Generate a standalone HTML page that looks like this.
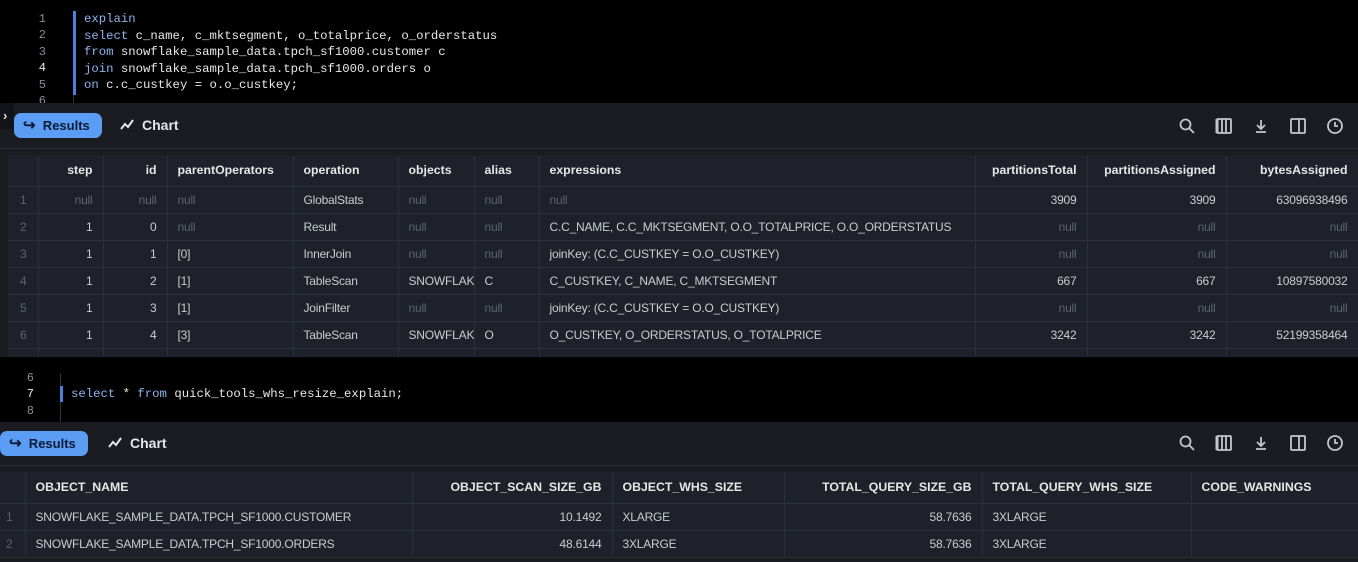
<!DOCTYPE html>
<html><head><style>
*{margin:0;padding:0;box-sizing:border-box}
body{width:1358px;height:562px;background:#000;overflow:hidden;position:relative;font-family:"Liberation Sans",sans-serif}
.code{position:absolute;font-family:"Liberation Mono",monospace;font-size:12.3px;color:#e8e8e8;white-space:pre}
.ln{position:absolute;font-family:"Liberation Mono",monospace;font-size:12px;color:#8a8d94;text-align:right;width:20px}
.kw{color:#8fb3ee}
.bar{position:absolute;background:#4a7fe0;width:3px}
.tb{position:absolute;left:0;width:1358px;background:#1a1c22}
.btn{position:absolute;background:#5b9cf5;border-radius:7px;color:#0c1a33;font-size:13px;font-weight:bold;line-height:25px;height:25px}
.chart{position:absolute;color:#e4e6ea;font-size:14px;font-weight:bold;display:flex;align-items:center;gap:8px}
.chart svg{width:14px;height:14px;stroke:#e4e6ea;fill:none;stroke-width:2}
table{position:absolute;border-collapse:collapse;background:#1e2129;font-size:12px;letter-spacing:-0.2px;table-layout:fixed}
td{border-right:1px solid #2b2f37;border-bottom:1px solid #2b2f37;padding:0 10px;color:#c9ccd2;white-space:nowrap;overflow:hidden;height:27px}
tr.h td{color:#e4e6ea;font-weight:bold;height:31px;font-size:12.3px;letter-spacing:0}
td.r{text-align:right}
td.n{color:#5e626b}
td.i{color:#5e626b;text-align:left;padding-left:12px}
.icons{position:absolute;right:14px;display:flex;gap:19px}
.icons svg{width:18px;height:18px;stroke:#c3c6cc;fill:none;stroke-width:1.8}
</style></head><body>

<div class="ln" style="left:26px;top:12px">1</div>
<div class="ln" style="left:26px;top:28px">2</div>
<div class="ln" style="left:26px;top:45px">3</div>
<div class="ln" style="left:26px;top:61px;color:#e8e8e8">4</div>
<div class="ln" style="left:26px;top:78px">5</div>
<div class="ln" style="left:26px;top:94px">6</div>
<div class="bar" style="left:73px;top:11px;height:84px"></div>
<div style="position:absolute;left:73px;top:95px;width:1px;height:8px;background:#333"></div>
<div class="code" style="left:84px;top:11px;line-height:16.5px"><span class="kw">explain</span>
<span class="kw">select</span> c_name, c_mktsegment, o_totalprice, o_orderstatus
<span class="kw">from</span> snowflake_sample_data.tpch_sf1000.customer c
<span class="kw">join</span> snowflake_sample_data.tpch_sf1000.orders o
<span class="kw">on</span> c.c_custkey = o.o_custkey;</div>

<div class="tb" style="top:103px;height:254px;background:#1a1c22"></div>
<div style="position:absolute;left:0;top:103px;width:14px;height:26px;background:#111318;color:#ddd;font-size:13px;font-weight:bold;padding-left:3px;line-height:26px">›</div>
<div class="btn" style="left:14px;top:113px;width:88px;padding-left:9px"><span style="font-size:15px">↪</span>&nbsp; Results</div>
<div class="chart" style="left:120px;top:117px"><svg viewBox="0 0 14 14"><path d="M1 11l4-5 3 3 5-7"/></svg>Chart</div>
<div class="icons" style="top:117px">
<svg viewBox="0 0 18 18"><circle cx="7.5" cy="7.5" r="5"/><path d="M11 11l5 5"/></svg>
<svg viewBox="0 0 18 18"><rect x="2" y="2" width="14" height="14" rx="1"/><path d="M7 2v14M11 2v14"/><path d="M2 2v14" stroke-width="3"/></svg>
<svg viewBox="0 0 18 18"><path d="M9 3v9M5 8l4 4 4-4M4 15h10"/></svg>
<svg viewBox="0 0 18 18"><rect x="2" y="2" width="14" height="14" rx="1"/><path d="M10 2v14"/></svg>
<svg viewBox="0 0 18 18"><circle cx="9" cy="9" r="7"/><path d="M9 5v4h3"/></svg>
</div>
<div style="position:absolute;left:0;top:148px;width:1358px;height:1px;background:#2a2d34"></div>

<table style="left:8px;top:155px;width:1350px">
<colgroup><col style="width:30px"><col style="width:65px"><col style="width:64px"><col style="width:126px"><col style="width:105px"><col style="width:76px"><col style="width:65px"><col style="width:436px"><col style="width:112px"><col style="width:139px"><col style="width:132px"></colgroup>
<tr class="h"><td></td><td class="r">step</td><td class="r">id</td><td>parentOperators</td><td>operation</td><td>objects</td><td>alias</td><td>expressions</td><td class="r">partitionsTotal</td><td class="r">partitionsAssigned</td><td class="r">bytesAssigned</td></tr>
<tr><td class="i">1</td><td class="r n">null</td><td class="r n">null</td><td class="n">null</td><td>GlobalStats</td><td class="n">null</td><td class="n">null</td><td class="n">null</td><td class="r">3909</td><td class="r">3909</td><td class="r">63096938496</td></tr>
<tr><td class="i">2</td><td class="r">1</td><td class="r">0</td><td class="n">null</td><td>Result</td><td class="n">null</td><td class="n">null</td><td>C.C_NAME, C.C_MKTSEGMENT, O.O_TOTALPRICE, O.O_ORDERSTATUS</td><td class="r n">null</td><td class="r n">null</td><td class="r n">null</td></tr>
<tr><td class="i">3</td><td class="r">1</td><td class="r">1</td><td>[0]</td><td>InnerJoin</td><td class="n">null</td><td class="n">null</td><td>joinKey: (C.C_CUSTKEY = O.O_CUSTKEY)</td><td class="r n">null</td><td class="r n">null</td><td class="r n">null</td></tr>
<tr><td class="i">4</td><td class="r">1</td><td class="r">2</td><td>[1]</td><td>TableScan</td><td>SNOWFLAKE</td><td>C</td><td>C_CUSTKEY, C_NAME, C_MKTSEGMENT</td><td class="r">667</td><td class="r">667</td><td class="r">10897580032</td></tr>
<tr><td class="i">5</td><td class="r">1</td><td class="r">3</td><td>[1]</td><td>JoinFilter</td><td class="n">null</td><td class="n">null</td><td>joinKey: (C.C_CUSTKEY = O.O_CUSTKEY)</td><td class="r n">null</td><td class="r n">null</td><td class="r n">null</td></tr>
<tr><td class="i">6</td><td class="r">1</td><td class="r">4</td><td>[3]</td><td>TableScan</td><td>SNOWFLAKE</td><td>O</td><td>O_CUSTKEY, O_ORDERSTATUS, O_TOTALPRICE</td><td class="r">3242</td><td class="r">3242</td><td class="r">52199358464</td></tr>
<tr><td></td><td></td><td></td><td></td><td></td><td></td><td></td><td></td><td></td><td></td><td></td></tr>
</table>

<div style="position:absolute;left:0;top:357px;width:1358px;height:65px;background:#000"></div>
<div class="ln" style="left:14px;top:371px">6</div>
<div class="ln" style="left:14px;top:387px;color:#e8e8e8">7</div>
<div class="ln" style="left:14px;top:404px">8</div>
<div style="position:absolute;left:60px;top:373px;width:1px;height:49px;background:#333"></div>
<div class="bar" style="left:60px;top:386px;height:16px"></div>
<div class="code" style="left:71px;top:387px"><span class="kw">select</span> * <span class="kw">from</span> quick_tools_whs_resize_explain;</div>

<div class="tb" style="top:422px;height:140px"></div>
<div class="btn" style="left:0;top:431px;width:88px;padding-left:9px"><span style="font-size:15px">↪</span>&nbsp; Results</div>
<div class="chart" style="left:108px;top:435px"><svg viewBox="0 0 14 14"><path d="M1 11l4-5 3 3 5-7"/></svg>Chart</div>
<div class="icons" style="top:434px">
<svg viewBox="0 0 18 18"><circle cx="7.5" cy="7.5" r="5"/><path d="M11 11l5 5"/></svg>
<svg viewBox="0 0 18 18"><rect x="2" y="2" width="14" height="14" rx="1"/><path d="M7 2v14M11 2v14"/><path d="M2 2v14" stroke-width="3"/></svg>
<svg viewBox="0 0 18 18"><path d="M9 3v9M5 8l4 4 4-4M4 15h10"/></svg>
<svg viewBox="0 0 18 18"><rect x="2" y="2" width="14" height="14" rx="1"/><path d="M10 2v14"/></svg>
<svg viewBox="0 0 18 18"><circle cx="9" cy="9" r="7"/><path d="M9 5v4h3"/></svg>
</div>
<div style="position:absolute;left:0;top:465px;width:1358px;height:1px;background:#2a2d34"></div>

<table style="left:0;top:472px;width:1358px">
<colgroup><col style="width:25px"><col style="width:387px"><col style="width:200px"><col style="width:172px"><col style="width:198px"><col style="width:209px"><col style="width:167px"></colgroup>
<tr class="h"><td></td><td>OBJECT_NAME</td><td class="r">OBJECT_SCAN_SIZE_GB</td><td>OBJECT_WHS_SIZE</td><td class="r">TOTAL_QUERY_SIZE_GB</td><td>TOTAL_QUERY_WHS_SIZE</td><td>CODE_WARNINGS</td></tr>
<tr><td class="i" style="padding-left:6px">1</td><td>SNOWFLAKE_SAMPLE_DATA.TPCH_SF1000.CUSTOMER</td><td class="r">10.1492</td><td>XLARGE</td><td class="r">58.7636</td><td>3XLARGE</td><td></td></tr>
<tr><td class="i" style="padding-left:6px">2</td><td>SNOWFLAKE_SAMPLE_DATA.TPCH_SF1000.ORDERS</td><td class="r">48.6144</td><td>3XLARGE</td><td class="r">58.7636</td><td>3XLARGE</td><td></td></tr>
</table>
</body></html>
